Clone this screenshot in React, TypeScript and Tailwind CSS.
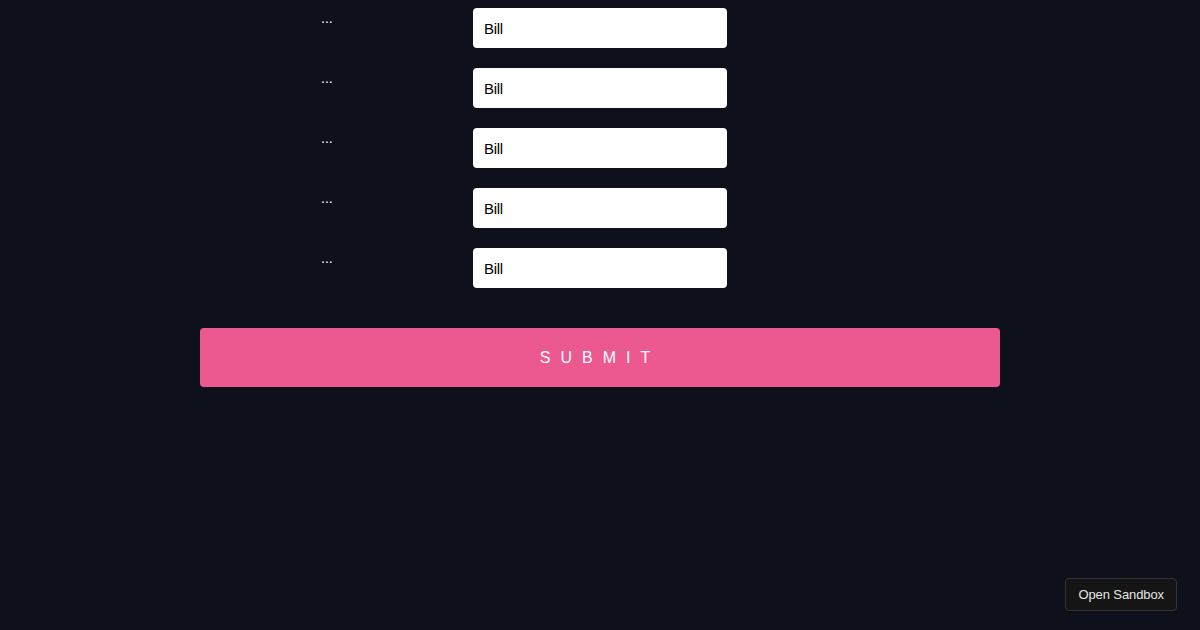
const rows = [0, 1, 2, 3, 4];

const App = () => {
  return (
    <main className="min-h-[630px] w-full bg-[#0e101c] font-['Liberation_Sans',Arial,sans-serif] relative">
      <form className="w-[800px] mx-auto pt-2">
        {rows.map((i) => (
          <div key={i} className="flex items-start mb-5">
            <label className="w-[273px] pl-[121px] text-white text-[14px] leading-[20px]">
              ...
            </label>
            <input
              defaultValue="Bill"
              className="w-[254px] h-10 bg-white rounded-[4px] px-[11px] text-[15px] tracking-[-0.3px] text-black outline-none"
            />
          </div>
        ))}
        <button
          type="button"
          className="mt-5 w-full h-[59px] bg-[#ec5990] rounded-[4px] text-white text-[16px] tracking-[10px] uppercase"
        >
          Submit
        </button>
      </form>
      <button className="absolute right-[23px] bottom-[19px] h-[33px] px-[12px] bg-[#151515] border border-[#333] rounded-[4px] text-[#e5e5e5] text-[13px] tracking-[-0.1px]">
        Open Sandbox
      </button>
    </main>
  );
};

export default App;
